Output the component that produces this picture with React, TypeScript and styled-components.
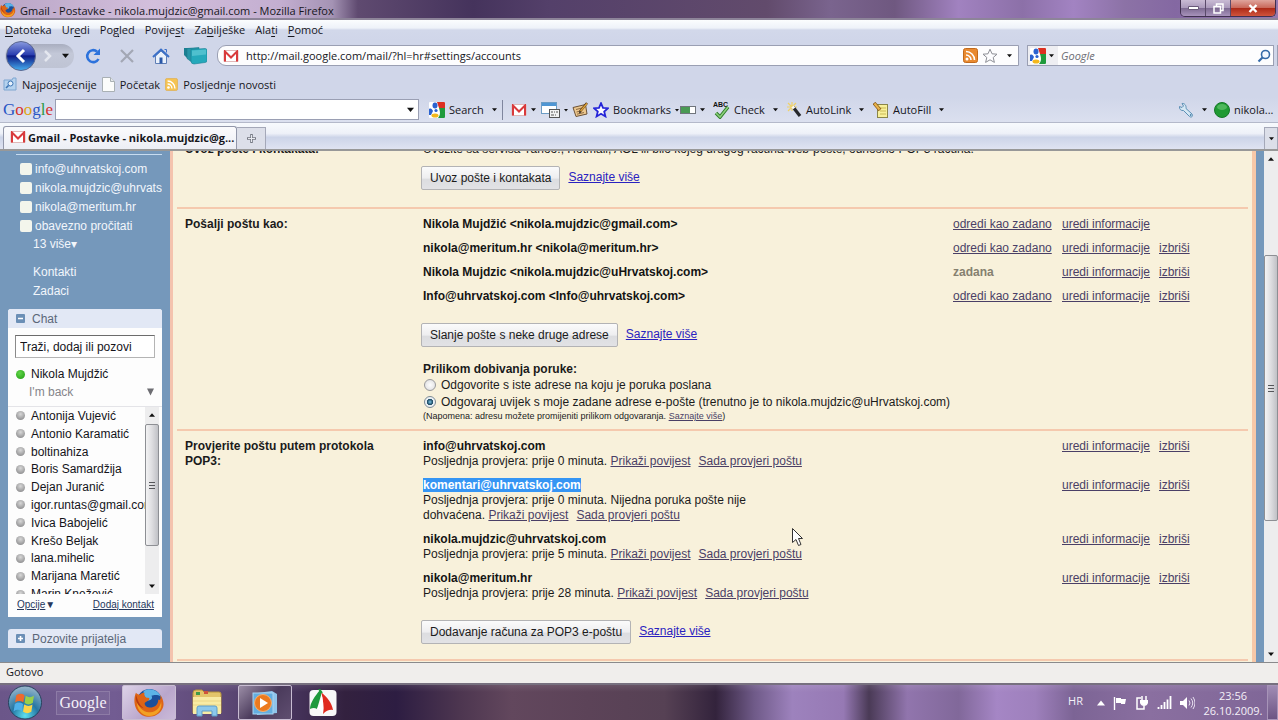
import React from "react";
import styled, { createGlobalStyle, css } from "styled-components";

const ui = `"Open Sans", "Noto Sans", sans-serif`;
const arial = `"Liberation Sans", Arial, sans-serif`;

const GlobalStyle = createGlobalStyle`
  * { box-sizing: border-box; }
  body { margin: 0; font-family: ${ui}; font-size: 11px; color: #16161c; }
  button, input { font: inherit; color: inherit; }
  ul { list-style: none; margin: 0; padding: 0; }
  svg { display: block; flex: none; }
`;

const Window = styled.div`
  display: flex;
  flex-direction: column;
  height: 100vh;
  overflow: hidden;
  background: #d0d6e9;
`;

/* ---------- title bar ---------- */

const TitleBar = styled.header`
  display: flex;
  align-items: flex-start;
  justify-content: space-between;
  flex: none;
  height: 20px;
  background:
    linear-gradient(#ffffff00 90%, #8d8499 90%),
    linear-gradient(90deg, #b9a5c6 0, #d3bfdc 12%, #c3aed0 22%, #a493b4 26%, #5f4a70 28%, #45335c 37%, #54406a 43%, #624b6c 60%, #7a648e 65%, #6f5880 70%, #a182c0 75%, #8c70a8 80%, #a283c2 84%, #8c72a6 88%, #8468a2 92%, #9478ae 100%);
`;

const WindowTitle = styled.div`
  display: flex;
  align-items: center;
  gap: 4px;
  height: 20px;
  white-space: nowrap;
`;

const WindowButtons = styled.div`
  display: flex;
  height: 17px;
  margin-right: 2px;
  border: 1px solid #40304f;
  border-top: 0;
  border-radius: 0 0 5px 5px;
  overflow: hidden;
`;

const WindowButton = styled.button<{ $close?: boolean }>`
  display: flex;
  align-items: center;
  justify-content: center;
  width: ${(p) => (p.$close ? 44 : 25)}px;
  border: 0;
  border-right: ${(p) => (p.$close ? 0 : 1)}px solid #5a4a6a;
  padding: 0;
  background: ${(p) =>
    p.$close
      ? "linear-gradient(#dfa49c 0, #c9685a 48%, #ad2a18 52%, #d0543c 100%)"
      : "linear-gradient(#c9bbd4 0, #ab9abc 48%, #7d6a92 52%, #a893bb 100%)"};
`;

/* ---------- menu and toolbars ---------- */

const MenuBar = styled.nav`
  display: flex;
  align-items: center;
  flex: none;
  gap: 10px;
  height: 20px;
  padding-left: 5px;
  background: linear-gradient(#fbfdfe 0, #eef2f9 40%, #d2d8ea 50%, #d0d6e9 100%);
`;

const MenuItem = styled.button`
  border: 0;
  padding: 0;
  background: none;
  line-height: 20px;
  u { text-underline-offset: 2px; }
`;

const NavBar = styled.div`
  display: flex;
  align-items: center;
  flex: none;
  height: 31px;
  padding-left: 5px;
`;

const BackForward = styled.div`
  display: flex;
  align-items: center;
  width: 69px;
  height: 24px;
  border-radius: 14px;
  background: linear-gradient(#a9aebf, #c3c8d8 40%, #bfc4d4);
`;

const IconButton = styled.button<{ $w: number }>`
  display: flex;
  align-items: center;
  justify-content: center;
  flex: none;
  width: ${(p) => p.$w}px;
  border: 0;
  padding: 0;
  background: none;
`;

const NavButtons = styled.div`
  display: flex;
  align-items: center;
  flex: none;
  padding: 0 5px 0 2px;
`;

const Field = styled.label`
  display: flex;
  align-items: center;
  height: 21px;
  border: 1px solid #9a9fb3;
  background: #fdfdfe;
`;

const FieldInput = styled.input<{ $hint?: boolean }>`
  flex: 1;
  min-width: 0;
  border: 0;
  padding: 0;
  background: none;
  outline: 0;
  ${(p) => p.$hint && css`
    padding-left: 3px;
    font-style: italic;
    &::placeholder { color: #6c6c74; opacity: 1; }
  `}
`;

const AddressField = styled(Field)`
  flex: 1;
  gap: 4px;
  padding: 0 2px 0 5px;
  border-radius: 9px 0 0 9px;
  ${FieldInput} { padding-left: 3px; }
`;

const SearchField = styled(Field)`
  width: 247px;
  margin-left: 8px;
  padding-right: 2px;
`;

const EnginePicker = styled.button`
  display: flex;
  align-items: center;
  gap: 3px;
  height: 19px;
  border: 0;
  padding: 0 4px 0 2px;
  background: #eeeef2;
`;

const FieldEdge = styled.div`
  width: 1px;
  height: 21px;
  margin-left: 3px;
  background: #9a9fb3;
`;

const BookmarksBar = styled.div`
  display: flex;
  align-items: center;
  flex: none;
  gap: 5px;
  height: 26px;
  padding-left: 3px;
`;

const Bookmark = styled.button`
  display: flex;
  align-items: center;
  gap: 5px;
  border: 0;
  padding: 0;
  background: none;
`;

const GoogleBar = styled.div`
  display: flex;
  align-items: center;
  flex: none;
  height: 25px;
  padding-left: 3px;
  background: linear-gradient(#d0d6e9, #dbe0ef);
`;

const GoogleLogo = styled.span`
  display: flex;
  width: 52px;
  font: 17px/20px "Liberation Serif", serif;
  .b { color: #2a56c4; }
  .r { color: #d6302c; }
  .y { color: #dfa514; }
  .g { color: #2b9a45; }
`;

const Combo = styled.label`
  display: flex;
  align-items: center;
  width: 364px;
  height: 21px;
  margin-right: 10px;
  padding-right: 4px;
  border: 1px solid #9a9fb3;
  background: #fff;
`;

const ToolButton = styled.button<{ $w: number }>`
  display: flex;
  align-items: center;
  flex: none;
  gap: 4px;
  width: ${(p) => p.$w}px;
  border: 0;
  padding: 0;
  background: none;
  white-space: nowrap;
`;

const CaretSlot = styled.span`
  display: flex;
  margin-left: 4px;
`;

const Account = styled.div`
  display: flex;
  margin-left: auto;
`;

const Splitter = styled.div`
  width: 1px;
  height: 20px;
  margin: 0 8px 0 4px;
  background: #7f869e;
`;

/* ---------- tab strip ---------- */

const TabStrip = styled.div`
  display: flex;
  align-items: flex-end;
  flex: none;
  height: 29px;
  padding-left: 3px;
  border-top: 1px solid #b4b9ca;
  border-bottom: 2px solid #989898;
  background: linear-gradient(#f7fafd 0, #eef1f8 40%, #ccd4e8 55%, #dfe3f1 100%);
`;

const Tab = styled.button`
  display: flex;
  align-items: center;
  gap: 2px;
  width: 234px;
  height: 23px;
  border: 1px solid #9297aa;
  border-bottom: 0;
  border-radius: 3px 3px 0 0;
  padding: 0 0 2px 6px;
  background: linear-gradient(#fbfbfd, #eceef5);
  font-weight: 700;
  white-space: nowrap;
`;

const NewTab = styled.button`
  display: flex;
  align-items: center;
  justify-content: center;
  width: 29px;
  height: 22px;
  border: 1px solid #a4a8b8;
  border-left: 0;
  border-bottom: 0;
  padding: 0;
  background: #dcdfe9;
`;

const TabList = styled(NewTab)`
  width: 14px;
  margin-left: auto;
  border-left: 1px solid #a4a8b8;
`;

/* ---------- page ---------- */

const Viewport = styled.main`
  display: flex;
  flex: 1;
  min-height: 0;
  overflow: hidden;
  background: #7598bb;
  font-family: ${arial};
`;

const Sidebar = styled.aside`
  flex: none;
  width: 170px;
  padding: 3px 8px 0;
  color: #f2f6fb;
  font-size: 12px;
`;

const Labels = styled.ul`
  display: grid;
  grid-auto-rows: 1fr;
  height: 100px;
  margin-left: 8px;
  padding-top: 5px;
  border-top: 1px solid #c8dcf0;
`;

const Label = styled.li`
  display: flex;
  align-items: center;
  gap: 3px;
  padding-left: 4px;
  overflow: hidden;
  a { color: inherit; text-decoration: none; white-space: nowrap; }
`;

const LabelSwatch = styled.span`
  flex: none;
  width: 12px;
  height: 12px;
  border-radius: 2px;
  background: #f3f5ec;
`;

const More = styled.li`
  padding-left: 17px;
  line-height: 19px;
`;

const SideLinks = styled.nav`
  display: flex;
  flex-direction: column;
  margin: 9px 0 8px 25px;
  line-height: 19px;
  a { color: inherit; text-decoration: none; }
`;

const ChatBox = styled.section`
  width: 154px;
  border-radius: 3px 3px 0 0;
  background: #fdfdfd;
  color: #14141a;
  overflow: hidden;
`;

const BoxHeader = styled.h2<{ $round?: boolean }>`
  display: flex;
  align-items: center;
  gap: 7px;
  width: 154px;
  height: 19px;
  margin: 0;
  padding-left: 8px;
  border-radius: ${(p) => (p.$round ? "3px 3px 0 0" : "0")};
  background: #e2e8f5;
  color: #5b6778;
  font-size: 12px;
  font-weight: 400;
`;

const ChatSearch = styled.input`
  display: block;
  width: 140px;
  height: 23px;
  margin: 7px 7px 7px;
  border: 1px solid #b4b4b4;
  border-top-color: #6c6c6c;
  border-left-color: #8a8a8a;
  padding: 0 4px;
  background: #fff;
`;

const Me = styled.div`
  display: flex;
  align-items: center;
  gap: 6px;
  height: 18px;
  padding-left: 8px;
`;

const StatusLine = styled.div`
  display: flex;
  align-items: center;
  justify-content: space-between;
  height: 18px;
  padding: 0 8px 0 21px;
  color: #85858a;
  font-size: 12px;
`;

const BuddyPane = styled.div`
  display: flex;
  height: 188px;
  margin-top: 5px;
  border-top: 1px solid #e4e4e8;
  overflow: hidden;
`;

const Buddies = styled.ul`
  display: grid;
  grid-auto-rows: 1fr;
  width: 137px;
  height: 196px;
  padding-left: 8px;
  overflow: hidden;
`;

const Buddy = styled.li`
  display: flex;
  align-items: center;
  gap: 6px;
  white-space: nowrap;
`;

const Dot = styled.span<{ $online?: boolean }>`
  flex: none;
  width: 9px;
  height: 9px;
  border-radius: 50%;
  background: ${(p) =>
    p.$online
      ? "radial-gradient(circle at 40% 35%, #62d64a, #1d9a10)"
      : "radial-gradient(circle at 50% 35%, #d8d8d8, #7e7e80)"};
`;

const ScrollTrack = styled.div<{ $w: number }>`
  display: flex;
  flex-direction: column;
  align-items: center;
  flex: none;
  width: ${(p) => p.$w}px;
  padding: 5px 0;
  background: #ededee;
`;

const Thumb = styled.div<{ $top: number; $height: string }>`
  display: flex;
  align-items: center;
  justify-content: center;
  width: 100%;
  height: ${(p) => p.$height};
  margin-top: ${(p) => p.$top}px;
  border: 1px solid #8d8f94;
  border-radius: 2px;
  background: linear-gradient(90deg, #f3f3f4, #dddde0 50%, #c0c1c6);
`;

const TrackEnd = styled.div`
  margin-top: auto;
`;

const ChatFooter = styled.footer`
  display: flex;
  align-items: center;
  justify-content: space-between;
  height: 23px;
  padding: 0 8px 2px 9px;
  font-size: 10px;
  color: #25375c;
  a { color: inherit; }
`;

const Invite = styled.div`
  margin-top: 12px;
`;

const Settings = styled.div`
  flex: 1;
  min-width: 0;
  margin-right: 8px;
  padding: 0 4px;
  border-left: 3px solid #f4c3ae;
  border-right: 4px solid #f7c8a8;
  background: #f8f1db;
  color: #1b1b1b;
  font-size: 12px;
  line-height: 15px;
`;

/* The page is scrolled part of a line past the start of the import section. */
const Scrolled = styled.div`
  margin-top: -9px;
`;

const Section = styled.section`
  display: grid;
  grid-template-columns: 238px 1fr;
  padding-left: 8px;
  border-bottom: 2px solid #f5c9ae;
`;

const SectionTitle = styled.h3`
  margin: 0;
  padding-right: 40px;
  font-size: 12px;
  font-weight: 700;
`;

const SectionBody = styled.div`
  min-width: 0;
`;

const ImportSection = styled(Section)`
  padding-bottom: 17px;
`;

const SendSection = styled(Section)`
  padding-top: 7px;
  padding-bottom: 7px;
  ${SectionTitle} { line-height: 17px; }
`;

const PopSection = styled(Section)`
  padding-top: 8px;
  padding-bottom: 15px;
`;

const Paragraph = styled.p`
  margin: 0;
  white-space: nowrap;
`;

const Actions = styled.div<{ $top: number }>`
  display: flex;
  align-items: flex-start;
  gap: 8px;
  margin-top: ${(p) => p.$top}px;
  margin-left: -2px;
`;

const GmailButton = styled.button`
  height: 24px;
  border: 1px solid #b3b3b5;
  border-radius: 2px;
  padding: 0 8px;
  background: linear-gradient(#fbfbfb 0, #eeeef0 50%, #dcdde0 56%, #e2e2e5 100%);
`;

const LearnMore = styled.a`
  margin-top: 4px;
  color: #2a22c0;
`;

const AddressTable = styled.table`
  width: 100%;
  border-collapse: collapse;
  table-layout: fixed;
  td, th { padding: 0; text-align: left; vertical-align: top; font-weight: 400; }
`;

const SendRow = styled.tr`
  height: 24px;
  line-height: 17px;
`;

const PopRow = styled.tr`
  td, th { padding-bottom: 9px; }
`;

const Address = styled.strong<{ $selected?: boolean }>`
  background: ${(p) => (p.$selected ? "#3595f4" : "transparent")};
  color: ${(p) => (p.$selected ? "#fff" : "#141414")};
`;

const CheckInfo = styled.div`
  max-width: 388px;
`;

const ActionLink = styled.a<{ $gap?: boolean }>`
  margin-right: ${(p) => (p.$gap ? 8 : 0)}px;
  color: #4a3f66;
  white-space: nowrap;
`;

const DefaultMark = styled.strong`
  color: #85806f;
`;

const ReplyOptions = styled.fieldset`
  display: flex;
  flex-direction: column;
  margin: 15px 0 0;
  border: 0;
  padding: 0;
  legend { padding: 0; font-weight: 700; }
`;

const RadioLabel = styled.label`
  display: flex;
  align-items: center;
  gap: 5px;
  height: 17px;
  white-space: nowrap;
  input {
    appearance: none;
    width: 12px;
    height: 12px;
    margin: 0 0 2px 1px;
    border: 1px solid #98999c;
    border-radius: 50%;
    background: radial-gradient(#fdfdfd, #dcdcde);
  }
  input:checked {
    border-color: #7d8b96;
    background: radial-gradient(#7cc4e4 0, #17455f 40%, #e8eef2 50%, #f6f8fa 100%);
  }
`;

const Note = styled.small`
  font-size: 9px;
  line-height: 11px;
`;

/* ---------- status bar and taskbar ---------- */

const StatusBar = styled.footer`
  flex: none;
  height: 21px;
  padding-left: 6px;
  border-top: 1px solid #8a8a8c;
  background: #f0eeec;
  line-height: 18px;
`;

const Taskbar = styled.nav`
  display: flex;
  align-items: center;
  flex: none;
  height: 37px;
  padding-left: 7px;
  border-top: 2px solid #77707f;
  color: #f4f0f8;
  background:
    linear-gradient(#ffffff18, #ffffff00 20%),
    linear-gradient(90deg, #6b5689 0, #725c92 9%, #5f4a78 17%, #4a3762 22%, #33213f 27%, #2d1d42 31%, #4d3650 36%, #62475d 40%, #5c4358 46%, #564154 52%, #33233c 56%, #6f5a88 59%, #9d82bd 62%, #9679b4 66%, #4a3a56 68%, #9175ad 71%, #81689a 75%, #a586c5 78%, #9e80bc 81%, #7c6495 84%, #8a6fa0 90%, #7f6697 100%);
`;

const GoogleDesk = styled.button`
  width: 54px;
  height: 24px;
  margin: 0 12px 0 13px;
  border: 1px solid #8d7ba6;
  padding: 0;
  background: #ffffff10;
  font: 16px/20px "Liberation Serif", serif;
`;

const Task = styled.button<{ $w: number; $state?: "active" | "open" }>`
  display: flex;
  align-items: center;
  justify-content: center;
  width: ${(p) => p.$w}px;
  height: 35px;
  border: 1px solid ${(p) => (p.$state ? "#c8bcd2" : "transparent")};
  border-radius: 2px;
  padding: 0;
  background: ${(p) =>
    p.$state === "active"
      ? "linear-gradient(135deg, #ddd2e8, #b9a6cc 60%, #cbbbd9)"
      : p.$state === "open"
        ? "linear-gradient(135deg, #9b8da6, #4b3b5c 50%, #5f4e70)"
        : "none"};
`;

const Tray = styled.div`
  display: flex;
  align-items: center;
  align-self: stretch;
  margin-left: auto;
`;

const Language = styled.span`
  margin: 0 14px 4px 0;
`;

const TrayIcons = styled.div`
  display: flex;
  align-items: center;
  gap: 8px;
`;

const Clock = styled.time`
  width: 68px;
  margin-left: 4px;
  text-align: center;
  line-height: 15px;
`;

const ShowDesktop = styled.button`
  align-self: stretch;
  width: 11px;
  border: 1px solid #a794b8;
  padding: 0;
  background: linear-gradient(#a08cb4, #6d5584);
`;

const Pointer = styled.div`
  position: fixed;
  left: 791px;
  top: 527px;
  pointer-events: none;
`;

/* ---------- icons ---------- */

const Caret = ({ size = 5, color = "#111", up = false }: { size?: number; color?: string; up?: boolean }) => (
  <svg width={size} height={size} viewBox="0 0 10 10" aria-hidden="true">
    <path d={up ? "M0 8 5 2 10 8Z" : "M0 2.500h10L5 8.500Z"} fill={color} />
  </svg>
);

const Firefox = ({ size }: { size: number }) => (
  <svg width={size} height={size} viewBox="0 0 32 32" aria-hidden="true">
    <circle cx="16" cy="15" r="13" fill="#1c4f9c" />
    <path d="M10 4c6-4 15-1 18 6-5-3-8-1-10-1 2 3-1 5-4 5-2-3-5-6-4-10Z" fill="#5cb3e8" />
    <path d="M2 6c1 1 2 2 4 2 2-2 4-2 5-2-1 2 0 4 2 5 1 0 3 0 3 1-1 3-5 3-5 5 0 3 4 5 8 4 4-1 6-4 6-8 2 1 3 0 2-5 3 4 5 10 2 15-4 8-15 10-22 5C0 23-1 13 2 6Z" fill="#de6416" />
    <path d="M3 13c1 8 7 14 14 13 6 0 10-5 11-11 2 9-5 15-12 15C8 30 2 23 3 13Z" fill="#f2a124" />
    <path d="M2 8c2 6 3 10 8 14-6-2-9-7-8-14Z" fill="#b73b12" />
  </svg>
);

const Gmail = () => (
  <svg width="16" height="12" viewBox="0 0 16 12" aria-hidden="true">
    <path d="M1 .5h14v11H1Z" fill="#fff" stroke="#e0b8b8" />
    <path d="M2 11.500v-10l6 6 6-6v10" fill="none" stroke="#d93a3c" strokeWidth="2" />
  </svg>
);

const GoogleG = () => (
  <svg width="16" height="16" viewBox="0 0 16 16" aria-hidden="true">
    <rect width="16" height="16" rx="1" fill="#fff" />
    <path d="M8 0h7a1 1 0 0 1 1 1v5H10Z" fill="#dc2f20" />
    <path d="M10 6h6v9a1 1 0 0 1-1 1H9c3-3 2-7 1-10Z" fill="#1f9a3c" />
    <path d="M0 7c2-1 3 0 4 2l-2 4H0Z" fill="#2a62d0" />
    <ellipse cx="6" cy="3.500" rx="2.500" ry="3" fill="#2a62d0" />
    <circle cx="7" cy="8.500" r="1.600" fill="#2a62d0" />
    <ellipse cx="6" cy="13.500" rx="3.500" ry="2" fill="#f3b71c" />
  </svg>
);

const BackIcon = () => (
  <svg width="30" height="30" viewBox="0 0 30 30" aria-hidden="true">
    <defs>
      <linearGradient id="back" x1="0" y1="0" x2="0" y2="1">
        <stop offset="0" stopColor="#8a9be0" />
        <stop offset="0.450" stopColor="#2b3fb0" />
        <stop offset="0.500" stopColor="#0d1a86" />
        <stop offset="1" stopColor="#48b0f0" />
      </linearGradient>
    </defs>
    <circle cx="15" cy="15" r="14.500" fill="url(#back)" stroke="#5c6890" />
    <path d="M18 9l-6 6 6 6" fill="none" stroke="#fff" strokeWidth="3" />
  </svg>
);

const ForwardIcon = () => (
  <svg width="16" height="14" viewBox="0 0 16 14" aria-hidden="true">
    <path d="M6 2l5 5-5 5" fill="none" stroke="#e4e7ef" strokeWidth="2.500" />
  </svg>
);

const Reload = () => (
  <svg width="18" height="18" viewBox="0 0 18 18" aria-hidden="true">
    <path d="M14.500 12A6 6 0 1 1 13 4.500" fill="none" stroke="#2c72dc" strokeWidth="2.600" />
    <path d="M16 1.500v6.500H9.500Z" fill="#2c72dc" />
  </svg>
);

const Stop = () => (
  <svg width="16" height="16" viewBox="0 0 16 16" aria-hidden="true">
    <path d="M2 2l12 12M14 2 2 14" stroke="#a3a7b4" strokeWidth="2.200" />
  </svg>
);

const HomeIcon = () => (
  <svg width="18" height="16" viewBox="0 0 18 16" aria-hidden="true">
    <path d="M3.500 8v7.500h11V8L9 3Z" fill="#eaf1fb" stroke="#5f7fb6" />
    <path d="M1 9l8-7.500L17 9" fill="none" stroke="#3a6fc8" strokeWidth="2" />
    <path d="M7.500 9.500h3v6h-3Z" fill="#2a58a8" />
    <path d="M12.500 1.500h2v3" fill="none" stroke="#3a6fc8" />
  </svg>
);

const Cards = () => (
  <svg width="24" height="18" viewBox="0 0 24 18" aria-hidden="true">
    <path d="M1 1h13v10l-9 1-4-4Z" fill="#1c7f92" />
    <path d="M4 1.500l12-1v14H8l-4-3Z" fill="#2896a8" stroke="#1d7c8e" strokeWidth="0.600" />
    <path d="M8 2.500l14-1q2 0 2 2v10q0 2-2 2l-11 1.500q-3 0-3-3Z" fill="#25a9bb" stroke="#198094" strokeWidth="0.600" />
    <path d="M9 3.500l14-1v5L9 9Z" fill="#4fc0ce" />
  </svg>
);

const Rss = ({ pale = false, size = 15 }: { pale?: boolean; size?: number }) => (
  <svg width={size} height={size} viewBox="0 0 15 15" aria-hidden="true">
    <rect x="0.500" y="0.500" width="14" height="14" rx="2" fill={pale ? "#f5c352" : "#e98a30"} stroke={pale ? "#e0b25c" : "#c26a1c"} />
    <circle cx="4" cy="11" r="1.500" fill="#fff" />
    <path d="M3 7a5 5 0 0 1 5 5M3 3.500A8.500 8.500 0 0 1 11.500 12" fill="none" stroke="#fff" strokeWidth="1.600" />
  </svg>
);

const Star = ({ color, size = 16, w = 1 }: { color: string; size?: number; w?: number }) => (
  <svg width={size} height={size} viewBox="0 0 16 16" aria-hidden="true">
    <path d="M8 1.200l2 4.600 5 .4-3.800 3.300 1.200 4.900L8 11.800l-4.400 2.600 1.200-4.900L1 6.200l5-.4Z" fill="#fdfdff" stroke={color} strokeWidth={w} />
  </svg>
);

const Magnifier = () => (
  <svg width="14" height="14" viewBox="0 0 14 14" aria-hidden="true">
    <circle cx="8.500" cy="5.500" r="4" fill="#f2f7ff" stroke="#356aa8" strokeWidth="1.600" />
    <path d="M5.500 8.500 1.500 12.500" stroke="#356aa8" strokeWidth="2.200" />
  </svg>
);

const FolderSearch = () => (
  <svg width="14" height="14" viewBox="0 0 14 14" aria-hidden="true">
    <path d="M1 3h8l1-2h3v12H1Z" fill="#b5d2ee" stroke="#7fa6d0" />
    <circle cx="7.500" cy="6.500" r="2.500" fill="#e6f1fc" stroke="#3b74b4" />
    <path d="M5.500 8.500 3 11" stroke="#3b74b4" strokeWidth="1.600" />
  </svg>
);

const PageIcon = () => (
  <svg width="13" height="15" viewBox="0 0 13 15" aria-hidden="true">
    <path d="M0.500 0.500h8l4 4v10h-12Z" fill="#fbfcfb" stroke="#a9b0b4" />
    <path d="M8.500 0.500v4h4" fill="#e4e8ea" stroke="#a9b0b4" />
  </svg>
);

const CalendarIcon = () => (
  <svg width="19" height="17" viewBox="0 0 19 17" aria-hidden="true">
    <rect x="0.500" y="1.500" width="15" height="11" fill="#fff" stroke="#6c9cc4" />
    <path d="M1 2h14v3H1Z" fill="#4f96d4" />
    <rect x="8.500" y="8.500" width="10" height="8" fill="#f2f2f2" stroke="#555" />
    <path d="M10 11h2m1 0h1m1 0h2M10 14h3m1 0h1" stroke="#555" />
  </svg>
);

const NotebookIcon = () => (
  <svg width="17" height="16" viewBox="0 0 17 16" aria-hidden="true">
    <path d="M1 5.500l12.500-3L15 12 4 14.500Z" fill="#ecc78e" stroke="#6b5136" />
    <path d="M4 7.500l6-1.500M4.500 10l5-1.200M5 12.200l7-1.700" stroke="#8f6c44" />
    <path d="M8 9.500 15 1" stroke="#5a3a18" strokeWidth="2.400" />
    <path d="M8.500 9 15 1.500" stroke="#e0a63a" strokeWidth="1.200" />
    <path d="M7 11.500l.5-2.500 1.800 1.200Z" fill="#222" />
  </svg>
);

const Meter = () => (
  <svg width="16" height="8" viewBox="0 0 16 8" aria-hidden="true">
    <rect x="0.500" y="0.500" width="15" height="7" fill="#fff" stroke="#70757c" />
    <rect x="1" y="1" width="9" height="6" fill="#4a9a54" />
  </svg>
);

const SpellIcon = () => (
  <svg width="17" height="18" viewBox="0 0 17 18" aria-hidden="true">
    <text x="0" y="6" fontSize="7" fontWeight="700" fontFamily="Liberation Sans" fill="#111">ABC</text>
    <path d="M3 12l4 4 8-10" fill="none" stroke="#2f7d2a" strokeWidth="3.600" />
    <path d="M3 12l4 4 8-10" fill="none" stroke="#8cd07c" strokeWidth="1.600" />
  </svg>
);

const WandIcon = () => (
  <svg width="15" height="16" viewBox="0 0 15 16" aria-hidden="true">
    <path d="M5 0v9M0 5h10M1 1l8 8M9 1 1 9" stroke="#f0d268" strokeWidth="1.200" />
    <path d="M6 5l7 9" stroke="#26282c" strokeWidth="3.200" />
    <path d="M5.500 4.500l1.500 2" stroke="#f8f8f8" strokeWidth="3" />
  </svg>
);

const FillIcon = () => (
  <svg width="16" height="16" viewBox="0 0 16 16" aria-hidden="true">
    <rect x="4.500" y="2.500" width="10" height="13" fill="#f8f09a" stroke="#8a8648" />
    <path d="M7 6h6M7 9h6M7 12h6" stroke="#c9ba54" />
    <path d="M1 1l6 7" stroke="#8c5c1c" strokeWidth="3.600" />
    <path d="M1.500 1.500l5 6" stroke="#e9b44c" strokeWidth="2" />
  </svg>
);

const WrenchIcon = () => (
  <svg width="16" height="16" viewBox="0 0 16 16" aria-hidden="true">
    <path d="M4 1.500 5.500 4 4 5.500 1.500 4.500C1 7 3 9 5.500 8.500l6 6c2 1.500 4-.5 2.500-2.500l-6-5.500C8.500 3.500 6.500 1 4 1.500Z" fill="#d6e8f4" stroke="#5b8fb4" />
    <circle cx="12.700" cy="13" r="0.900" fill="#4a83ad" />
  </svg>
);

const GreenBall = () => (
  <svg width="16" height="16" viewBox="0 0 16 16" aria-hidden="true">
    <circle cx="8" cy="8" r="7.500" fill="#1f9a33" stroke="#157826" />
    <ellipse cx="8" cy="5" rx="5" ry="3" fill="#4fb85c" />
  </svg>
);

const PlusIcon = () => (
  <svg width="9" height="9" viewBox="0 0 9 9" aria-hidden="true">
    <path d="M0 4.500h9M4.500 0v9" stroke="#767a84" strokeWidth="2.600" />
    <path d="M1 4.500h7M4.500 1v7" stroke="#e8eaf0" />
  </svg>
);

const BoxToggle = ({ plus = false }: { plus?: boolean }) => (
  <svg width="9" height="9" viewBox="0 0 9 9" aria-hidden="true">
    <rect width="9" height="9" rx="1" fill="#6b8fb6" />
    <path d={plus ? "M2 4.500h5M4.500 2v5" : "M2 4.500h5"} stroke="#fff" strokeWidth="1.600" />
  </svg>
);

const StatusArrow = () => (
  <svg width="7" height="8" viewBox="0 0 7 8" aria-hidden="true">
    <path d="M0 0.500h7L3.500 7.500Z" fill="#6d6d72" />
  </svg>
);

const Grip = () => (
  <svg width="6" height="7" viewBox="0 0 6 7" aria-hidden="true">
    <path d="M0 .5h6M0 3.500h6M0 6.500h6" stroke="#55565a" />
  </svg>
);

const StartOrb = () => (
  <svg width="36" height="35" viewBox="0 0 36 36" aria-hidden="true">
    <defs>
      <radialGradient id="orb" cx="0.500" cy="0.900" r="0.900">
        <stop offset="0" stopColor="#5ee0f0" />
        <stop offset="0.450" stopColor="#2577a4" />
        <stop offset="1" stopColor="#9db8cc" />
      </radialGradient>
    </defs>
    <circle cx="18" cy="18" r="17" fill="url(#orb)" stroke="#26405c" />
    <path d="M9 10.500c3-2 6-2 8.500 0l-1.200 7.500c-3-2-5.500-2-8.500 0Z" fill="#ee6a2c" />
    <path d="M18.700 11c3 2 5.500 2 8.500 0l-1.200 7.500c-3 2-5.500 2-8.500 0Z" fill="#9ad04a" />
    <path d="M7.500 19.500c3-2 5.500-2 8.500 0L14.800 27c-3-2-5.500-2-8.500 0Z" fill="#4fb0ea" />
    <path d="M17.200 20c3 2 5.500 2 8.500 0l-1.200 7.500c-3 2-5.500 2-8.500 0Z" fill="#fbd44a" />
  </svg>
);

const ExplorerIcon = () => (
  <svg width="30" height="28" viewBox="0 0 30 28" aria-hidden="true">
    <path d="M1 4q0-3 3-3h6l2 2h15q2 0 2 2v19H1Z" fill="#e3c56a" stroke="#b7953a" />
    <path d="M4 3h4v3H4Z" fill="#3f9a48" />
    <path d="M12 2h4v3h-4Z" fill="#d0543a" />
    <path d="M1 8h28v17H1Z" fill="#f8eba4" />
    <path d="M1 12h28M1 16h28" stroke="#ecd584" />
    <path d="M5 27v-8q0-2 2-2h16q2 0 2 2v8h-5v-5H10v5Z" fill="#8cc8ec" stroke="#5c9cc8" />
  </svg>
);

const PlayerIcon = () => (
  <svg width="26" height="26" viewBox="0 0 26 26" aria-hidden="true">
    <path d="M5 3 20 1l5 3v19l-20 2Z" fill="#8fc4ea" />
    <rect x="1" y="3" width="20" height="21" fill="#64aee0" stroke="#a9d4f2" />
    <circle cx="11" cy="13" r="8.500" fill="#ec7a1e" stroke="#f7b070" />
    <path d="M8 8l8 5-8 5Z" fill="#fff" />
  </svg>
);

const ParasolIcon = () => (
  <svg width="28" height="28" viewBox="0 0 28 28" aria-hidden="true">
    <rect x="0.500" y="1" width="27" height="26" rx="4" fill="#f8f8f8" />
    <path d="M11 1C6 7 1 14 1 20q4-2 7 0L13 3Z" fill="#1e9a3c" />
    <path d="M12 3c6 5 11 11 12 18q-5-1-10 4C15 17 14 10 12 3Z" fill="#e02a1e" />
    <path d="M12 3c1 6-1 12-4 17q3 0 6 5C15 17 14 10 12 3Z" fill="#fff" />
    <path d="M10 0l3 4" stroke="#1e9a3c" strokeWidth="2" />
  </svg>
);

const FlagIcon = () => (
  <svg width="14" height="14" viewBox="0 0 14 14" aria-hidden="true">
    <path d="M1.500 1v13" stroke="#fff" strokeWidth="1.400" />
    <path d="M3 2h5v1h5l-1 5H8V7H3Z" fill="#fff" />
  </svg>
);

const PlugIcon = () => (
  <svg width="14" height="15" viewBox="0 0 14 15" aria-hidden="true">
    <path d="M6 3H2v11h7v-3" fill="none" stroke="#fff" strokeWidth="1.500" />
    <path d="M7 1v4M11 1v4" stroke="#fff" strokeWidth="1.500" />
    <path d="M5 5h8v3q-1 3-4 3t-4-3Z" fill="#fff" />
  </svg>
);

const SignalIcon = () => (
  <svg width="15" height="13" viewBox="0 0 15 13" aria-hidden="true">
    <path d="M1.500 13v-2M4.500 13V9M7.500 13V6M10.500 13V3.500M13.500 13V0" stroke="#fff" strokeWidth="1.800" />
  </svg>
);

const SpeakerIcon = () => (
  <svg width="15" height="14" viewBox="0 0 15 14" aria-hidden="true">
    <path d="M0 5h3l4-4v12L3 9H0Z" fill="#fff" />
    <path d="M9 4.500q2 2.500 0 5M11 2.500q3.500 4.500 0 9M13 1q4 6 0 12" fill="none" stroke="#e8e0f0" />
  </svg>
);

/* ---------- data ---------- */

const menu: [string, string, string][] = [
  ["", "D", "atoteka"], ["Ur", "e", "di"], ["Po", "g", "led"], ["Povije", "s", "t"],
  ["Za", "b", "ilješke"], ["Ala", "t", "i"], ["", "P", "omoć"],
];

const labels = ["info@uhrvatskoj.com", "nikola.mujdzic@uhrvatskoj.com", "nikola@meritum.hr", "obavezno pročitati"];

const buddies = [
  "Antonija Vujević", "Antonio Karamatić", "boltinahiza", "Boris Samardžija", "Dejan Juranić",
  "igor.runtas@gmail.com", "Ivica Babojelić", "Krešo Beljak", "lana.mihelic", "Marijana Maretić", "Marin Knežević",
];

const senders = [
  { name: "Nikola Mujdžić <nikola.mujdzic@gmail.com>", removable: false },
  { name: "nikola@meritum.hr <nikola@meritum.hr>", removable: true },
  { name: "Nikola Mujdzic <nikola.mujdzic@uHrvatskoj.com>", removable: true, isDefault: true },
  { name: "Info@uhrvatskoj.com <Info@uhrvatskoj.com>", removable: true },
];

const popAccounts: { name: string; minutes: number; extra?: string; selected?: boolean }[] = [
  { name: "info@uhrvatskoj.com", minutes: 0 },
  { name: "komentari@uhrvatskoj.com", minutes: 0, extra: "Nijedna poruka pošte nije dohvaćena.", selected: true },
  { name: "nikola.mujdzic@uhrvatskoj.com", minutes: 5 },
  { name: "nikola@meritum.hr", minutes: 28 },
];

/* ---------- app ---------- */

export default function App() {
  return (
    <Window>
      <GlobalStyle />
      <TitleBar>
        <WindowTitle>
          <Firefox size={16} />
          Gmail - Postavke - nikola.mujdzic@gmail.com - Mozilla Firefox
        </WindowTitle>
        <WindowButtons>
          <WindowButton aria-label="Minimize">
            <svg width="11" height="5"><path d="M.5.500h10v3H.5Z" fill="#fff" stroke="#6a5a7a" /></svg>
          </WindowButton>
          <WindowButton aria-label="Restore">
            <svg width="11" height="11" viewBox="0 0 11 11" fill="none" stroke="#fff" strokeWidth="1.500"><path d="M3.500 3V1h6.500v6.500H8M1 3.500h6.500V10H1Z" /></svg>
          </WindowButton>
          <WindowButton $close aria-label="Close">
            <svg width="10" height="9" viewBox="0 0 10 9"><path d="M1.500 1l7 7M8.500 1l-7 7" stroke="#fff" strokeWidth="2.400" /></svg>
          </WindowButton>
        </WindowButtons>
      </TitleBar>

      <MenuBar>
        {menu.map(([a, key, b]) => (
          <MenuItem key={a + b}>{a}<u>{key}</u>{b}</MenuItem>
        ))}
      </MenuBar>

      <NavBar>
        <BackForward>
          <IconButton $w={32} aria-label="Back"><BackIcon /></IconButton>
          <IconButton $w={20} aria-label="Forward"><ForwardIcon /></IconButton>
          <IconButton $w={17} aria-label="History"><Caret size={7} /></IconButton>
        </BackForward>
        <NavButtons>
          <IconButton $w={34} aria-label="Reload"><Reload /></IconButton>
          <IconButton $w={34} aria-label="Stop"><Stop /></IconButton>
          <IconButton $w={34} aria-label="Home"><HomeIcon /></IconButton>
          <IconButton $w={34} aria-label="Cards"><Cards /></IconButton>
        </NavButtons>
        <AddressField>
          <Gmail />
          <FieldInput aria-label="Address" defaultValue="http://mail.google.com/mail/?hl=hr#settings/accounts" />
          <Rss />
          <Star color="#8d8f96" />
          <IconButton $w={14} aria-label="Addresses"><Caret /></IconButton>
        </AddressField>
        <SearchField>
          <EnginePicker aria-label="Search engine"><GoogleG /><Caret /></EnginePicker>
          <FieldInput $hint aria-label="Search" placeholder="Google" />
          <Magnifier />
        </SearchField>
        <FieldEdge />
      </NavBar>

      <BookmarksBar>
        <Bookmark><FolderSearch />Najposjećenije</Bookmark>
        <Bookmark><PageIcon />Početak</Bookmark>
        <Bookmark><Rss pale size={13} />Posljednje novosti</Bookmark>
      </BookmarksBar>

      <GoogleBar>
        <GoogleLogo>
          <span className="b">G</span><span className="r">o</span><span className="y">o</span>
          <span className="b">g</span><span className="g">l</span><span className="r">e</span>
        </GoogleLogo>
        <Combo>
          <FieldInput aria-label="Google search" />
          <Caret size={7} />
        </Combo>
        <ToolButton $w={69}><GoogleG />Search<CaretSlot><Caret /></CaretSlot></ToolButton>
        <Splitter />
        <ToolButton $w={30} aria-label="Gmail"><Gmail /><Caret /></ToolButton>
        <ToolButton $w={31} aria-label="Calendar"><CalendarIcon /><Caret size={4} /></ToolButton>
        <ToolButton $w={21} aria-label="Notebook"><NotebookIcon /></ToolButton>
        <ToolButton $w={87}><Star color="#2424d8" w={1.8} />Bookmarks<Caret size={4} /></ToolButton>
        <ToolButton $w={33} aria-label="PageRank"><Meter /><Caret /></ToolButton>
        <ToolButton $w={74}><SpellIcon />Check<CaretSlot><Caret /></CaretSlot></ToolButton>
        <ToolButton $w={86}><WandIcon />AutoLink<CaretSlot><Caret /></CaretSlot></ToolButton>
        <ToolButton $w={80}><FillIcon />AutoFill<CaretSlot><Caret /></CaretSlot></ToolButton>
        <Account>
          <ToolButton $w={36} aria-label="Options"><WrenchIcon /><CaretSlot><Caret /></CaretSlot></ToolButton>
          <ToolButton $w={64}><GreenBall />nikola...</ToolButton>
        </Account>
      </GoogleBar>

      <TabStrip>
        <Tab><Gmail />Gmail - Postavke - nikola.mujdzic@g...</Tab>
        <NewTab aria-label="New tab"><PlusIcon /></NewTab>
        <TabList aria-label="All tabs"><Caret /></TabList>
      </TabStrip>

      <Viewport>
        <Sidebar>
          <Labels>
            {labels.map((l) => (
              <Label key={l}><LabelSwatch /><a href="#label">{l}</a></Label>
            ))}
            <More>13 više▾</More>
          </Labels>
          <SideLinks>
            <a href="#contacts">Kontakti</a>
            <a href="#tasks">Zadaci</a>
          </SideLinks>
          <ChatBox>
            <BoxHeader><BoxToggle />Chat</BoxHeader>
            <ChatSearch aria-label="Chat search" defaultValue="Traži, dodaj ili pozovi" />
            <Me><Dot $online />Nikola Mujdžić</Me>
            <StatusLine>I'm back<StatusArrow /></StatusLine>
            <BuddyPane>
              <Buddies>
                {buddies.map((b) => (
                  <Buddy key={b}><Dot />{b}</Buddy>
                ))}
              </Buddies>
              <ScrollTrack $w={14}>
                <Caret size={6} up />
                <Thumb $top={6} $height="122px"><Grip /></Thumb>
                <TrackEnd><Caret size={6} /></TrackEnd>
              </ScrollTrack>
            </BuddyPane>
            <ChatFooter>
              <span><a href="#options">Opcije</a>▼</span>
              <a href="#add">Dodaj kontakt</a>
            </ChatFooter>
          </ChatBox>
          <Invite>
            <BoxHeader $round><BoxToggle plus />Pozovite prijatelja</BoxHeader>
          </Invite>
        </Sidebar>

        <Settings>
          <Scrolled>
            <ImportSection>
              <SectionTitle>Uvoz pošte i kontakata:</SectionTitle>
              <SectionBody>
                <Paragraph>Uvozite sa servisa Yahoo!, Hotmail, AOL ili bilo kojeg drugog računa web-pošte, odnosno POP3 računa.</Paragraph>
                <Actions $top={9}>
                  <GmailButton>Uvoz pošte i kontakata</GmailButton>
                  <LearnMore href="#import">Saznajte više</LearnMore>
                </Actions>
              </SectionBody>
            </ImportSection>

            <SendSection>
              <SectionTitle>Pošalji poštu kao:</SectionTitle>
              <SectionBody>
                <AddressTable>
                  <colgroup><col /><col width="109" /><col width="97" /><col width="89" /></colgroup>
                  <tbody>
                    {senders.map((s) => (
                      <SendRow key={s.name}>
                        <th scope="row"><Address>{s.name}</Address></th>
                        <td>{s.isDefault ? <DefaultMark>zadana</DefaultMark> : <ActionLink href="#default">odredi kao zadano</ActionLink>}</td>
                        <td><ActionLink href="#edit">uredi informacije</ActionLink></td>
                        <td>{s.removable && <ActionLink href="#delete">izbriši</ActionLink>}</td>
                      </SendRow>
                    ))}
                  </tbody>
                </AddressTable>
                <Actions $top={11}>
                  <GmailButton>Slanje pošte s neke druge adrese</GmailButton>
                  <LearnMore href="#send">Saznajte više</LearnMore>
                </Actions>
                <ReplyOptions>
                  <legend>Prilikom dobivanja poruke:</legend>
                  <RadioLabel><input type="radio" name="reply" />Odgovorite s iste adrese na koju je poruka poslana</RadioLabel>
                  <RadioLabel><input type="radio" name="reply" defaultChecked />Odgovaraj uvijek s moje zadane adrese e-pošte (trenutno je to nikola.mujdzic@uHrvatskoj.com)</RadioLabel>
                  <Note>(Napomena: adresu možete promijeniti prilikom odgovaranja. <ActionLink href="#note">Saznajte više</ActionLink>)</Note>
                </ReplyOptions>
              </SectionBody>
            </SendSection>

            <PopSection>
              <SectionTitle>Provjerite poštu putem protokola POP3:</SectionTitle>
              <SectionBody>
                <AddressTable>
                  <colgroup><col /><col width="97" /><col width="89" /></colgroup>
                  <tbody>
                    {popAccounts.map((p) => (
                      <PopRow key={p.name}>
                        <th scope="row">
                          <Address $selected={p.selected}>{p.name}</Address>
                          <CheckInfo>
                            Posljednja provjera: prije {p.minutes} minuta. {p.extra}{" "}
                            <ActionLink $gap href="#history">Prikaži povijest</ActionLink>
                            <ActionLink href="#check">Sada provjeri poštu</ActionLink>
                          </CheckInfo>
                        </th>
                        <td><ActionLink href="#edit">uredi informacije</ActionLink></td>
                        <td><ActionLink href="#delete">izbriši</ActionLink></td>
                      </PopRow>
                    ))}
                  </tbody>
                </AddressTable>
                <Actions $top={10}>
                  <GmailButton>Dodavanje računa za POP3 e-poštu</GmailButton>
                  <LearnMore href="#pop">Saznajte više</LearnMore>
                </Actions>
              </SectionBody>
            </PopSection>
          </Scrolled>
        </Settings>

        <ScrollTrack $w={14}>
          <Caret size={6} up />
          <Thumb $top={93} $height="266px"><Grip /></Thumb>
          <TrackEnd><Caret size={6} /></TrackEnd>
        </ScrollTrack>
      </Viewport>

      <StatusBar>Gotovo</StatusBar>

      <Taskbar>
        <IconButton $w={36} aria-label="Start"><StartOrb /></IconButton>
        <GoogleDesk>Google</GoogleDesk>
        <Task $w={54} $state="active" aria-label="Mozilla Firefox"><Firefox size={31} /></Task>
        <Task $w={62} aria-label="Windows Explorer"><ExplorerIcon /></Task>
        <Task $w={54} $state="open" aria-label="Media Player"><PlayerIcon /></Task>
        <Task $w={62} aria-label="Parasol"><ParasolIcon /></Task>
        <Tray>
          <Language>HR</Language>
          <TrayIcons>
            <Caret size={8} color="#fff" up />
            <FlagIcon />
            <PlugIcon />
            <SignalIcon />
            <SpeakerIcon />
          </TrayIcons>
          <Clock>23:56<br />26.10.2009.</Clock>
          <ShowDesktop aria-label="Show desktop" />
        </Tray>
      </Taskbar>

      <Pointer>
        <svg width="14" height="20" viewBox="0 0 14 20" aria-hidden="true">
          <path d="M1.500 1.500v14l3.500-3 2.500 6 2.500-1-2.500-6h4Z" fill="#fff" stroke="#333" />
        </svg>
      </Pointer>
    </Window>
  );
}
